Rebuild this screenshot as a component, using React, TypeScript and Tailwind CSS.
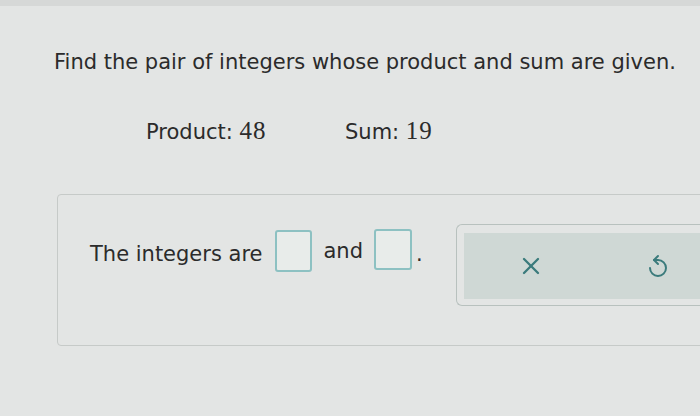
import { X } from 'lucide-react';

export default function App() {
  return (
    <div
      className="w-[700px] h-[416px] overflow-hidden bg-[#e3e5e4] text-[#2b2b2b] flex flex-col"
      style={{ fontFamily: '"DejaVu Sans", Verdana, sans-serif' }}
    >
      <div className="h-[6px] bg-[#d6d8d7]" />
      <div className="pl-[54px] pt-[44px] text-[21px] leading-6 whitespace-nowrap">
        Find the pair of integers whose product and sum are given.
      </div>

      <div className="flex pl-[146px] pt-[45px] text-[21px] leading-6 whitespace-nowrap">
        <div className="w-[199px]">
          Product: <span className="font-['Liberation_Serif',serif] text-[25px] tracking-[1px]">48</span>
        </div>
        <div>
          Sum: <span className="font-['Liberation_Serif',serif] text-[25px] tracking-[1px]">19</span>
        </div>
      </div>

      <div className="ml-[57px] mt-[50px] h-[152px] w-[700px] rounded-[4px] border border-[#c6cac8] pt-[34px]">
        <div className="flex items-start pl-[32px] text-[21px] leading-6 whitespace-nowrap">
          <span className="mt-[13px] mr-[12px]">The integers are</span>
          <span className="mt-[1px] w-[37px] h-[42px] rounded-[3px] border-2 border-[#8dc1c2] bg-[#e8ecea]" />
          <span className="mt-[10px] ml-[12px] mr-[11px]">and</span>
          <span className="w-[38px] h-[41px] rounded-[3px] border-2 border-[#8dc1c2] bg-[#e8ecea]" />
          <span className="mt-[13px] ml-[4px]">.</span>
          <div className="-mt-[5px] ml-[33px] w-[260px] h-[82px] rounded-l-[6px] border border-r-0 border-[#b8c1be] pl-[7px] pt-[8px] pb-[6px]">
            <div className="h-full w-full bg-[#cfd8d5] flex items-center text-[#3b7b7c]">
              <div className="w-[134px] flex justify-center">
                <X size={28} strokeWidth={2} />
              </div>
              <div className="w-[118px] flex justify-center">
                <svg width="22" height="26" viewBox="0 0 22 26" fill="none" stroke="currentColor" strokeWidth="2" strokeLinecap="round" strokeLinejoin="round">
                  <path d="M4 15 A8 8 0 1 0 12 7 L8 7" />
                  <path d="M12 3 L8 7 L12 11" />
                </svg>
              </div>
            </div>
          </div>
        </div>
      </div>
    </div>
  );
}
